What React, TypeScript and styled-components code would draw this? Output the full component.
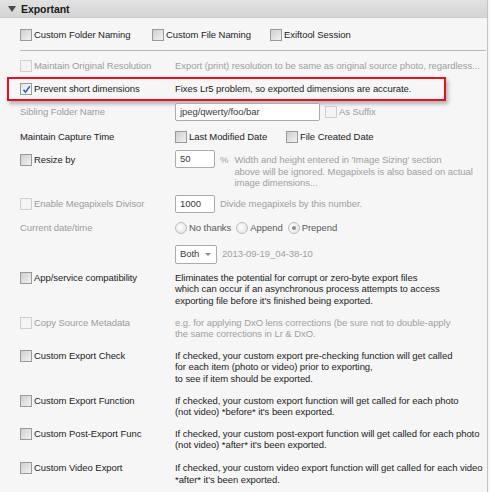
import React from "react";
import styled, { createGlobalStyle, css } from "styled-components";

const GlobalStyle = createGlobalStyle`
    html, body {
        margin: 0;
        padding: 0;
        background: #f6f6f6;
    }
    body {
        font-family: "Liberation Sans", Arial, sans-serif;
        font-size: 9.5px;
        letter-spacing: -0.06px;
        color: #1c1c1c;
    }
`;

const Panel = styled.div`
    width: 488px;
    height: 492px;
    background: #f6f6f6;
    border-right: 1px solid #c4c4c4;
    box-sizing: border-box;
    overflow: hidden;
`;

const Header = styled.div`
    height: 18px;
    display: flex;
    align-items: center;
    gap: 5px;
    padding-left: 8px;
    background: linear-gradient(#e2e2e2, #d4d4d4);
    border-bottom: 1px solid #cbcbcb;
    box-sizing: border-box;
`;

const Triangle = styled.span`
    width: 0;
    height: 0;
    border-left: 4px solid transparent;
    border-right: 4px solid transparent;
    border-top: 6px solid #4a4a4a;
`;

const HeaderTitle = styled.span`
    font-size: 10.5px;
    font-weight: bold;
    color: #1a1a1a;
`;

const Body = styled.div`
    padding-left: 20px;
    display: flex;
    flex-direction: column;
`;

const Row = styled.div<{ $top: number; $align?: string; $h?: number }>`
    display: flex;
    align-items: ${(p) => p.$align ?? "flex-start"};
    margin-top: ${(p) => p.$top}px;
    ${(p) => p.$h && css`height: ${p.$h}px;`}
    line-height: 12px;
    white-space: nowrap;
`;

const Highlight = styled(Row)`
    margin-left: -13px;
    width: 439px;
    box-sizing: border-box;
    padding: 4px 0 4px 11px;
    border: 2px solid #e5121b;
    box-shadow: 2px 3px 4px rgba(0, 0, 0, 0.28);
`;

const Separator = styled.div`
    margin-top: 9px;
    height: 1px;
    background: #b9b9b9;
    margin-right: 1px;
`;

const LabelCol = styled.div<{ $muted?: boolean; $pad?: number }>`
    width: 155px;
    flex-shrink: 0;
    display: flex;
    align-items: center;
    gap: 2px;
    height: 12px;
    margin-top: ${(p) => p.$pad ?? 0}px;
    color: ${(p) => (p.$muted ? "#9c9c9c" : "#1c1c1c")};
`;

const Desc = styled.div<{ $muted?: boolean; $pad?: number; $ml?: number }>`
    color: ${(p) => (p.$muted ? "#a0a0a0" : "#1c1c1c")};
    margin-top: ${(p) => p.$pad ?? 0}px;
    margin-left: ${(p) => p.$ml ?? 0}px;
    line-height: 11.6px;
`;

const Box = styled.span<{ $disabled?: boolean; $checked?: boolean }>`
    width: 12px;
    height: 12px;
    box-sizing: border-box;
    flex-shrink: 0;
    display: inline-flex;
    align-items: center;
    justify-content: center;
    border: 1px solid ${(p) => (p.$disabled ? "#cfcfcf" : "#9a9a9a")};
    background: ${(p) =>
        p.$disabled
            ? "#f4f4f4"
            : p.$checked
            ? "linear-gradient(135deg, #e4e4e4, #ffffff)"
            : "linear-gradient(135deg, #cfcfcf, #f2f2f2)"};
`;

const Inline = styled.span<{ $w?: number; $tone?: string; $ml?: number }>`
    display: inline-flex;
    align-items: center;
    gap: 2px;
    ${(p) => p.$w && css`width: ${p.$w}px;`}
    margin-left: ${(p) => p.$ml ?? 0}px;
    color: ${(p) => p.$tone ?? "#1c1c1c"};
    flex-shrink: 0;
`;

const Field = styled.div<{ $w: number; $h?: number }>`
    width: ${(p) => p.$w}px;
    height: ${(p) => p.$h ?? 18}px;
    box-sizing: border-box;
    border: 1px solid #ababab;
    border-radius: 2px;
    background: #ffffff;
    display: flex;
    align-items: center;
    padding-left: 4px;
    color: #3a3a3a;
    flex-shrink: 0;
`;

const Select = styled(Field)`
    justify-content: space-between;
    padding-right: 5px;
`;

const Caret = styled.span`
    width: 0;
    height: 0;
    border-left: 3px solid transparent;
    border-right: 3px solid transparent;
    border-top: 3px solid #8a8a8a;
`;

const Note = styled.span<{ $gap?: number; $pad?: number }>`
    color: #a0a0a0;
    margin-left: ${(p) => p.$gap ?? 5}px;
    margin-top: ${(p) => p.$pad ?? 0}px;
`;

const Radio = styled.span<{ $on?: boolean }>`
    width: 12px;
    height: 12px;
    box-sizing: border-box;
    border-radius: 50%;
    border: 1px solid #bdbdbd;
    background: radial-gradient(circle at 40% 40%, #ffffff, #dedede);
    display: inline-flex;
    align-items: center;
    justify-content: center;
    &::after {
        content: "";
        width: 4px;
        height: 4px;
        border-radius: 50%;
        background: ${(p) => (p.$on ? "#8d8d8d" : "transparent")};
    }
`;

const RadioGroup = styled.div`
    display: flex;
    align-items: center;
    gap: 5px;
`;

const Check = () => (
    <svg width="9" height="9" viewBox="0 0 9 9">
        <path d="M1.5 4.8 L3.5 7.2 L7.8 1.2" fill="none" stroke="#2f5fb8" strokeWidth="1.5" />
    </svg>
);

const CheckBox = ({ checked, disabled }: { checked?: boolean; disabled?: boolean }) => (
    <Box $checked={checked} $disabled={disabled}>
        {checked && <Check />}
    </Box>
);

interface Item {
    label: string;
    top: number;
    muted?: boolean;
    lines: string[];
}

const items: Item[] = [
    {
        label: "App/service compatibility",
        top: 8,
        lines: [
            "Eliminates the potential for corrupt or zero-byte export files",
            "which can occur if an asynchronous process attempts to access",
            "exporting file before it's finished being exported.",
        ],
    },
    {
        label: "Copy Source Metadata",
        top: 10,
        muted: true,
        lines: [
            "e.g. for applying DxO lens corrections (be sure not to double-apply",
            "the same corrections in Lr & DxO.",
        ],
    },
    {
        label: "Custom Export Check",
        top: 10,
        lines: [
            "If checked, your custom export pre-checking function will get called",
            "for each item (photo or video) prior to exporting,",
            "to see if item should be exported.",
        ],
    },
    {
        label: "Custom Export Function",
        top: 10,
        lines: [
            "If checked, your custom export function will get called for each photo",
            "(not video) *before* it's been exported.",
        ],
    },
    {
        label: "Custom Post-Export Func",
        top: 10,
        lines: [
            "If checked, your custom post-export function will get called for each photo",
            "(not video) *after* it's been exported.",
        ],
    },
    {
        label: "Custom Video Export",
        top: 11,
        lines: [
            "If checked, your custom video export function will get called for each video",
            "*after* it's been exported.",
        ],
    },
];

const App: React.FC = () => {
    return (
        <>
            <GlobalStyle />
            <Panel>
                <Header>
                    <Triangle />
                    <HeaderTitle>Exportant</HeaderTitle>
                </Header>

                <Body>
                    <Row $top={11}>
                        <Inline $w={132}>
                            <CheckBox />
                            Custom Folder Naming
                        </Inline>
                        <Inline $w={118}>
                            <CheckBox />
                            Custom File Naming
                        </Inline>
                        <Inline>
                            <CheckBox />
                            Exiftool Session
                        </Inline>
                    </Row>

                    <Separator />

                    <Row $top={9}>
                        <LabelCol $muted>
                            <CheckBox disabled />
                            Maintain Original Resolution
                        </LabelCol>
                        <Desc $muted>
                            Export (print) resolution to be same as original source photo, regardless...
                        </Desc>
                    </Row>

                    <Highlight $top={5}>
                        <LabelCol>
                            <CheckBox checked />
                            Prevent short dimensions
                        </LabelCol>
                        <Desc>Fixes Lr5 problem, so exported dimensions are accurate.</Desc>
                    </Highlight>

                    <Row $top={2} $align="center" $h={18}>
                        <LabelCol $muted>Sibling Folder Name</LabelCol>
                        <Field $w={145}>jpeg/qwerty/foo/bar</Field>
                        <Inline $tone="#9c9c9c" $ml={5}>
                            <CheckBox disabled />
                            As Suffix
                        </Inline>
                    </Row>

                    <Row $top={10}>
                        <LabelCol>Maintain Capture Time</LabelCol>
                        <Inline $w={111}>
                            <CheckBox />
                            Last Modified Date
                        </Inline>
                        <Inline>
                            <CheckBox />
                            File Created Date
                        </Inline>
                    </Row>

                    <Row $top={7}>
                        <LabelCol $pad={4}>
                            <CheckBox />
                            Resize by
                        </LabelCol>
                        <Field $w={40}>50</Field>
                        <Note $pad={4}>%</Note>
                        <Desc $muted $pad={4} $ml={6}>
                            Width and height entered in 'Image Sizing' section
                            <br />
                            above will be ignored. Megapixels is also based on actual
                            <br />
                            image dimensions...
                        </Desc>
                    </Row>

                    <Row $top={6} $align="center" $h={18}>
                        <LabelCol $muted>
                            <CheckBox disabled />
                            Enable Megapixels Divisor
                        </LabelCol>
                        <Field $w={40}>1000</Field>
                        <Note>Divide megapixels by this number.</Note>
                    </Row>

                    <Row $top={9} $align="center">
                        <LabelCol $muted>Current date/time</LabelCol>
                        <RadioGroup>
                            <Inline $tone="#5a5a5a">
                                <Radio />
                                No thanks
                            </Inline>
                            <Inline $tone="#5a5a5a">
                                <Radio />
                                Append
                            </Inline>
                            <Inline $tone="#5a5a5a">
                                <Radio $on />
                                Prepend
                            </Inline>
                        </RadioGroup>
                    </Row>

                    <Row $top={11} $align="center" $h={19}>
                        <LabelCol />
                        <Select $w={42} $h={19}>
                            Both
                            <Caret />
                        </Select>
                        <Note>2013-09-19_04-38-10</Note>
                    </Row>

                    {items.map((it) => (
                        <Row key={it.label} $top={it.top}>
                            <LabelCol $muted={it.muted}>
                                <CheckBox disabled={it.muted} />
                                {it.label}
                            </LabelCol>
                            <Desc $muted={it.muted}>
                                {it.lines.map((l, i) => (
                                    <React.Fragment key={i}>
                                        {i > 0 && <br />}
                                        {l}
                                    </React.Fragment>
                                ))}
                            </Desc>
                        </Row>
                    ))}
                </Body>
            </Panel>
        </>
    );
};

export default App;
